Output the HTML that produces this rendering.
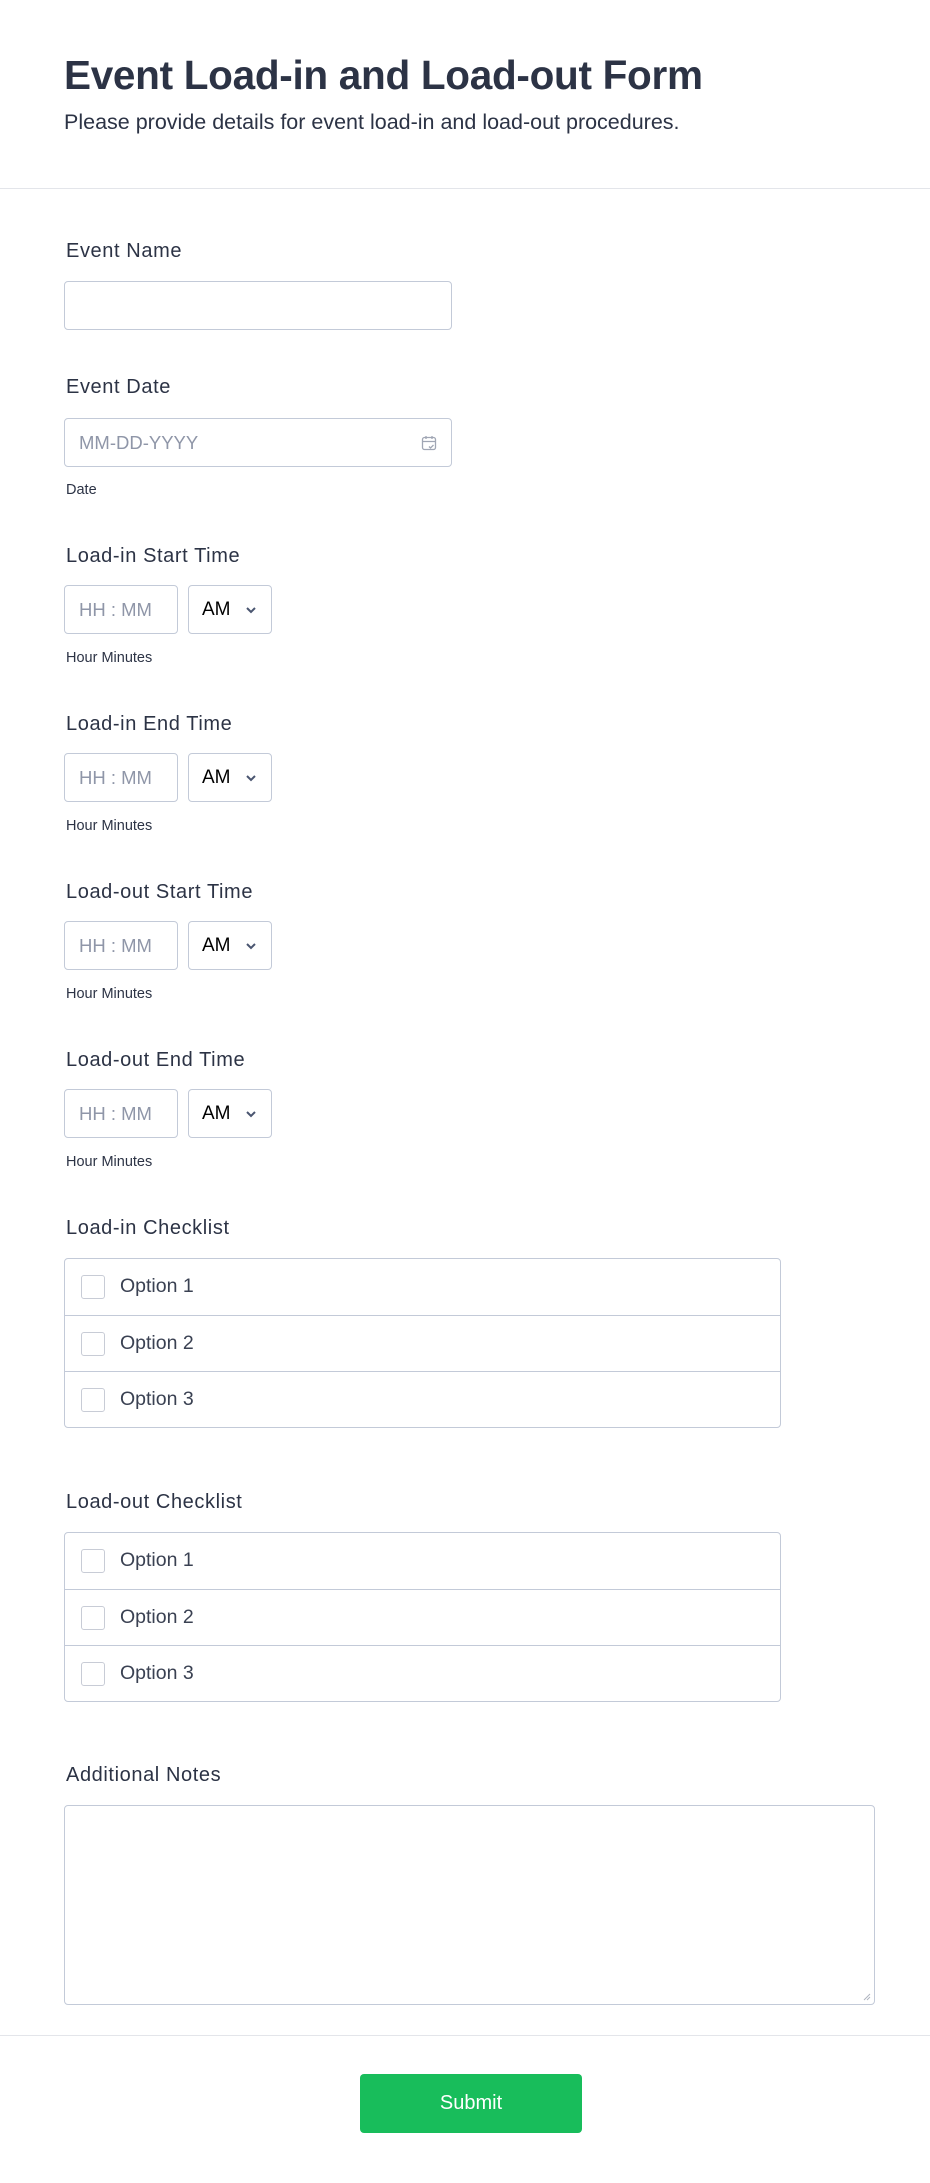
<!DOCTYPE html>
<html><head><meta charset="utf-8"><style>
*{box-sizing:border-box;margin:0;padding:0}
body{width:930px;height:2183px;background:#fff;font-family:"Liberation Sans",Arial,sans-serif;color:#2c3345;position:relative;overflow:hidden}
.a{position:absolute}
h1{position:absolute;left:64px;top:52px;font-size:40.5px;font-weight:bold;color:#2c3345;white-space:nowrap;letter-spacing:-0.3px}
.sub{left:64px;top:110px;font-size:21.5px;color:#2c3345;white-space:nowrap}
.hr{left:0;width:930px;height:1px;background:#e3e5ea}
.lbl{left:66px;font-size:20px;letter-spacing:0.6px;color:#2c3345;white-space:nowrap;line-height:24px}
.box{border:1px solid #c3cad8;border-radius:4px;background:#fff}
.small{left:66px;font-size:14.5px;color:#2c3345;line-height:18px}
.ph{color:#8f96a8;font-size:18.5px}
.time{left:64px;width:114px;height:49px}
.time span{position:absolute;left:14px;top:13px}
.am{left:188px;width:84px;height:49px}
.am span{position:absolute;left:13px;top:13px;font-size:19px;color:#000}
.am svg{position:absolute;left:56px;top:20px}
.cl{left:64px;width:717px;border:1px solid #c3cad8;border-radius:4px}
.row{height:56px;position:relative;border-top:1px solid #c3cad8}
.row:first-child{border-top:none}
.row i{position:absolute;left:16px;top:16px;width:24px;height:24px;border:1px solid #c8ccd6;border-radius:3px}
.row span{position:absolute;left:55px;top:16px;font-size:19.5px;color:#3a4152}
</style></head><body>
<h1>Event Load-in and Load-out Form</h1>
<div class="a sub">Please provide details for event load-in and load-out procedures.</div>
<div class="a hr" style="top:188px"></div>

<div class="a lbl" style="top:239px">Event Name</div>
<div class="a box" style="left:64px;top:281px;width:388px;height:49px"></div>

<div class="a lbl" style="top:375px">Event Date</div>
<div class="a box" style="left:64px;top:418px;width:388px;height:49px"><span class="a ph" style="left:14px;top:13px">MM-DD-YYYY</span>
<svg class="a" style="left:355px;top:15px" width="18" height="18" viewBox="0 0 18 18" fill="none" stroke="#a0a6b4" stroke-width="1.3"><rect x="2.5" y="3.5" width="13" height="12" rx="2"/><path d="M2.5 7.5h13M6 2v3M12 2v3M9 12.5l1.5 1.5 3-3"/></svg></div>
<div class="a small" style="top:481px">Date</div>

<div class="a lbl" style="top:544px">Load-in Start Time</div>
<div class="a box time" style="top:585px"><span class="ph">HH : MM</span></div>
<div class="a box am" style="top:585px"><span>AM</span><svg width="12" height="8" viewBox="0 0 12 8" fill="none" stroke="#4a5570" stroke-width="2"><path d="M2 2l4 4 4-4"/></svg></div>
<div class="a small" style="top:649px">Hour Minutes</div>

<div class="a lbl" style="top:712px">Load-in End Time</div>
<div class="a box time" style="top:753px"><span class="ph">HH : MM</span></div>
<div class="a box am" style="top:753px"><span>AM</span><svg width="12" height="8" viewBox="0 0 12 8" fill="none" stroke="#4a5570" stroke-width="2"><path d="M2 2l4 4 4-4"/></svg></div>
<div class="a small" style="top:817px">Hour Minutes</div>

<div class="a lbl" style="top:880px">Load-out Start Time</div>
<div class="a box time" style="top:921px"><span class="ph">HH : MM</span></div>
<div class="a box am" style="top:921px"><span>AM</span><svg width="12" height="8" viewBox="0 0 12 8" fill="none" stroke="#4a5570" stroke-width="2"><path d="M2 2l4 4 4-4"/></svg></div>
<div class="a small" style="top:985px">Hour Minutes</div>

<div class="a lbl" style="top:1048px">Load-out End Time</div>
<div class="a box time" style="top:1089px"><span class="ph">HH : MM</span></div>
<div class="a box am" style="top:1089px"><span>AM</span><svg width="12" height="8" viewBox="0 0 12 8" fill="none" stroke="#4a5570" stroke-width="2"><path d="M2 2l4 4 4-4"/></svg></div>
<div class="a small" style="top:1153px">Hour Minutes</div>

<div class="a lbl" style="top:1216px">Load-in Checklist</div>
<div class="a cl" style="top:1258px">
<div class="row"><i></i><span>Option 1</span></div>
<div class="row"><i></i><span>Option 2</span></div>
<div class="row"><i></i><span>Option 3</span></div>
</div>

<div class="a lbl" style="top:1490px">Load-out Checklist</div>
<div class="a cl" style="top:1532px">
<div class="row"><i></i><span>Option 1</span></div>
<div class="row"><i></i><span>Option 2</span></div>
<div class="row"><i></i><span>Option 3</span></div>
</div>

<div class="a lbl" style="top:1763px">Additional Notes</div>
<div class="a box" style="left:64px;top:1805px;width:811px;height:200px">
<svg class="a" style="right:3px;bottom:3px" width="9" height="9" viewBox="0 0 9 9" stroke="#b0b5c0" stroke-width="1"><path d="M8 2L2 8M8 5L5 8"/></svg></div>

<div class="a hr" style="top:2035px"></div>
<div class="a" style="left:360px;top:2074px;width:222px;height:59px;background:#18bd5b;border-radius:4px;color:#fff;font-size:20px;text-align:center;line-height:59px">Submit</div>
</body></html>
